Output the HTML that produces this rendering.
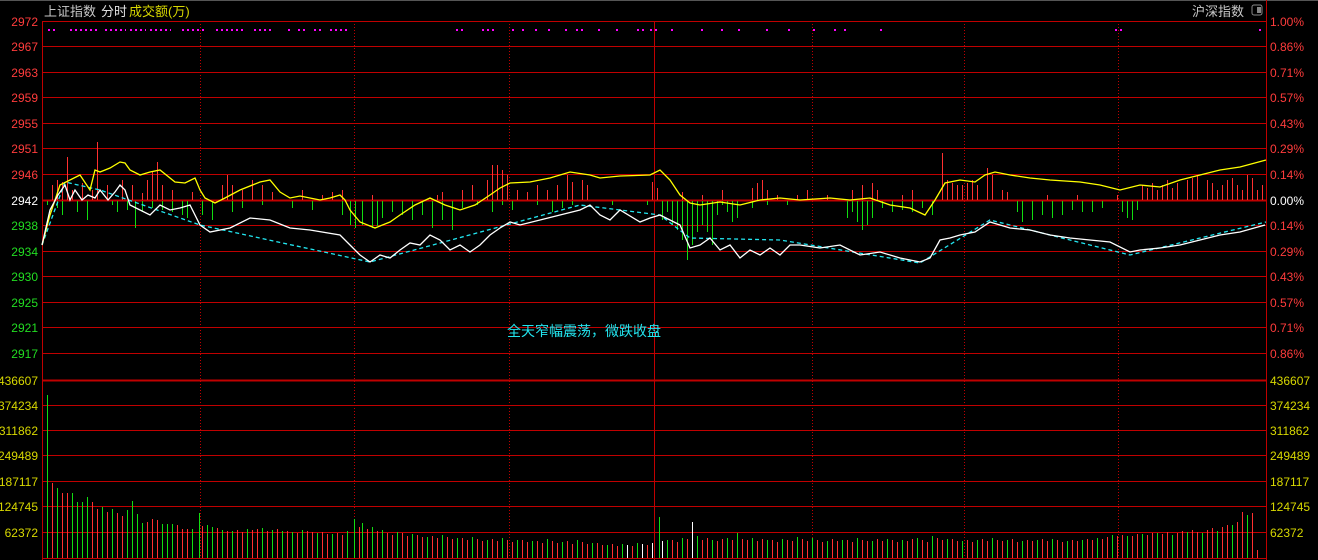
<!DOCTYPE html>
<html><head><meta charset="utf-8"><style>
html,body{margin:0;padding:0;background:#000;width:1318px;height:560px;overflow:hidden}
svg{display:block}
text{font-family:"Liberation Sans","Noto Sans CJK SC",sans-serif}
</style></head><body>
<svg width="1318" height="560" xmlns="http://www.w3.org/2000/svg">
<rect width="1318" height="560" fill="#000"/>
<line x1="0" y1="0.5" x2="1318" y2="0.5" stroke="#555"/>
<text x="44" y="16" font-size="13" fill="#c8c8c8">上证指数</text>
<text x="101" y="16" font-size="13" fill="#e0e0e0">分时</text>
<text x="129" y="16" font-size="13" fill="#d8d800">成交额(万)</text>
<text x="1192" y="16" font-size="13" fill="#c8c8c8">沪深指数</text>
<rect x="1252" y="5" width="10" height="10" rx="2" fill="none" stroke="#888"/>
<rect x="1257" y="7" width="4" height="6" fill="#888"/>

<g stroke="#c00000" fill="none">
<path d="M42 21.5H1266M42 46.5H1266M42 72.5H1266M42 97.5H1266M42 123.5H1266M42 148.5H1266M42 174.5H1266M42 225.5H1266M42 251.5H1266M42 276.5H1266M42 302.5H1266M42 327.5H1266M42 353.5H1266M42 405.5H1266M42 430.5H1266M42 455.5H1266M42 481.5H1266M42 506.5H1266M42 532.5H1266M42 558.5H1266M42.5 21V560M1266.5 0V560M654.5 21V560"/>
<path d="M42 200.5H1266M42 380.5H1266" stroke-width="2"/>
<path d="M200.5 21V560M354.5 21V560M509.5 21V560M812.5 21V560M964.5 21V560M1118.5 21V560" stroke-dasharray="1,2"/>
</g>

<g font-size="12" text-anchor="end">
<text x="38" y="26" fill="#ff3c3c">2972</text><text x="38" y="51" fill="#ff3c3c">2967</text><text x="38" y="77" fill="#ff3c3c">2963</text><text x="38" y="102" fill="#ff3c3c">2959</text><text x="38" y="128" fill="#ff3c3c">2955</text><text x="38" y="153" fill="#ff3c3c">2951</text><text x="38" y="179" fill="#ff3c3c">2946</text><text x="38" y="205" fill="#fff">2942</text><text x="38" y="230" fill="#22dd22">2938</text><text x="38" y="256" fill="#22dd22">2934</text><text x="38" y="281" fill="#22dd22">2930</text><text x="38" y="307" fill="#22dd22">2925</text><text x="38" y="332" fill="#22dd22">2921</text><text x="38" y="358" fill="#22dd22">2917</text>
<g fill="#d8d800"><text x="38" y="385">436607</text><text x="38" y="410">374234</text><text x="38" y="435">311862</text><text x="38" y="460">249489</text><text x="38" y="486">187117</text><text x="38" y="511">124745</text><text x="38" y="537">62372</text></g>
</g>
<g font-size="12" fill="#ff3c3c">
<text x="1270" y="26">1.00%</text><text x="1270" y="51">0.86%</text><text x="1270" y="77">0.71%</text><text x="1270" y="102">0.57%</text><text x="1270" y="128">0.43%</text><text x="1270" y="153">0.29%</text><text x="1270" y="179">0.14%</text><text x="1270" y="205" fill="#fff">0.00%</text><text x="1270" y="230">0.14%</text><text x="1270" y="256">0.29%</text><text x="1270" y="281">0.43%</text><text x="1270" y="307">0.57%</text><text x="1270" y="332">0.71%</text><text x="1270" y="358">0.86%</text>
<g fill="#d8d800"><text x="1270" y="385">436607</text><text x="1270" y="410">374234</text><text x="1270" y="435">311862</text><text x="1270" y="460">249489</text><text x="1270" y="486">187117</text><text x="1270" y="511">124745</text><text x="1270" y="537">62372</text></g>
</g>

<g stroke="#ff00ff" stroke-width="2" stroke-dasharray="2,3">
<path d="M48 30H57M70 30H97M105 30H126M130 30H146M150 30H171M182 30H205M216 30H244M254 30H272M288 30H291M298 30H306M314 30H322M330 30H348M456 30H466M482 30H496M512 30H515M522 30H525M535 30H538M548 30H551M565 30H568M576 30H584M598 30H601M616 30H619M637 30H645M650 30H658M671 30H674M701 30H704M721 30H724M738 30H741M766 30H769M788 30H791M813 30H816M834 30H837M844 30H847M880 30H883M1115 30H1123M1259 30H1262"/>
</g>

<path fill="none" stroke="#ff3030" d="M52.5 200V185M57.5 200V180M62.5 200V182M67.5 200V157M72.5 200V190M82.5 200V183M92.5 200V190M97.5 200V142M107.5 200V185M122.5 200V180M132.5 200V185M142.5 200V193M147.5 200V180M152.5 200V172M157.5 200V162M162.5 200V185M172.5 200V190M192.5 200V192M222.5 200V185M227.5 200V175M232.5 200V185M242.5 200V190M252.5 200V180M262.5 200V185M272.5 200V192M302.5 200V190M322.5 200V195M332.5 200V192M342.5 200V190M372.5 200V195M437.5 200V195M442.5 200V192M462.5 200V190M472.5 200V185M487.5 200V180M492.5 200V165M497.5 200V165M502.5 200V170M507.5 200V175M517.5 200V190M527.5 200V192M537.5 200V185M547.5 200V190M557.5 200V185M567.5 200V175M572.5 200V182M582.5 200V180M587.5 200V185M652.5 200V182M657.5 200V188M682.5 200V192M702.5 200V195M722.5 200V190M752.5 200V188M757.5 200V183M762.5 200V180M767.5 200V190M777.5 200V195M797.5 200V195M807.5 200V190M827.5 200V195M852.5 200V190M862.5 200V185M872.5 200V183M877.5 200V190M902.5 200V195M912.5 200V190M942.5 200V153M947.5 200V180M952.5 200V183M957.5 200V185M962.5 200V185M967.5 200V183M972.5 200V180M977.5 200V185M987.5 200V168M992.5 200V175M1002.5 200V190M1007.5 200V192M1047.5 200V195M1077.5 200V195M1117.5 200V195M1142.5 200V185M1147.5 200V188M1152.5 200V183M1157.5 200V190M1162.5 200V185M1167.5 200V180M1172.5 200V188M1177.5 200V183M1187.5 200V180M1192.5 200V178M1197.5 200V175M1207.5 200V180M1212.5 200V183M1217.5 200V190M1222.5 200V185M1227.5 200V180M1232.5 200V178M1237.5 200V185M1242.5 200V190M1247.5 200V175M1252.5 200V178M1257.5 200V190M1262.5 200V185"/>
<path fill="none" stroke="#11dd11" d="M47.5 201V205M57.5 201V208M62.5 201V215M77.5 201V212M87.5 201V220M112.5 201V205M117.5 201V212M127.5 201V210M135.5 201V228M142.5 201V212M152.5 201V208M162.5 201V210M172.5 201V212M182.5 201V215M187.5 201V218M202.5 201V215M212.5 201V220M232.5 201V212M242.5 201V208M262.5 201V205M292.5 201V208M312.5 201V210M342.5 201V215M350.5 201V225M355.5 201V228M362.5 201V225M372.5 201V228M377.5 201V226M382.5 201V218M392.5 201V212M402.5 201V215M412.5 201V220M422.5 201V215M432.5 201V228M442.5 201V220M452.5 201V230M462.5 201V208M477.5 201V205M492.5 201V212M502.5 201V205M512.5 201V210M537.5 201V205M552.5 201V212M562.5 201V208M572.5 201V205M612.5 201V205M647.5 201V205M662.5 201V220M667.5 201V212M672.5 201V225M677.5 201V230M682.5 201V240M687.5 201V260M692.5 201V245M697.5 201V232M702.5 201V225M707.5 201V232M712.5 201V245M717.5 201V215M722.5 201V205M727.5 201V212M732.5 201V222M737.5 201V218M752.5 201V208M767.5 201V205M787.5 201V205M847.5 201V218M852.5 201V212M857.5 201V222M862.5 201V230M867.5 201V225M872.5 201V218M882.5 201V208M892.5 201V212M902.5 201V210M912.5 201V212M922.5 201V208M932.5 201V215M1017.5 201V212M1022.5 201V222M1032.5 201V220M1042.5 201V215M1052.5 201V218M1062.5 201V215M1072.5 201V210M1082.5 201V212M1092.5 201V212M1102.5 201V208M1122.5 201V212M1127.5 201V218M1132.5 201V220M1137.5 201V210"/>

<path fill="none" stroke="#11dd11" d="M47.5 558V395M57.5 558V488M72.5 558V493M77.5 558V502M82.5 558V502M87.5 558V497M102.5 558V507M112.5 558V509M127.5 558V510M132.5 558V501M137.5 558V514M142.5 558V523M162.5 558V524M167.5 558V524M172.5 558V524M192.5 558V529M199.5 558V513M207.5 558V525M212.5 558V527M222.5 558V530M232.5 558V531M247.5 558V529M262.5 558V528M272.5 558V530M282.5 558V531M292.5 558V532M302.5 558V530M317.5 558V533M332.5 558V534M347.5 558V531M354.5 558V519M362.5 558V523M372.5 558V527M382.5 558V530M397.5 558V532M412.5 558V534M427.5 558V537M442.5 558V535M457.5 558V538M472.5 558V537M487.5 558V540M502.5 558V538M517.5 558V540M532.5 558V541M547.5 558V539M562.5 558V542M577.5 558V540M592.5 558V543M607.5 558V545M622.5 558V544M637.5 558V543M659.5 558V517M667.5 558V540M682.5 558V538M697.5 558V536M712.5 558V540M727.5 558V538M737.5 558V533M752.5 558V538M767.5 558V540M782.5 558V539M797.5 558V537M812.5 558V538M827.5 558V541M842.5 558V540M857.5 558V538M872.5 558V541M887.5 558V539M902.5 558V540M917.5 558V538M932.5 558V536M947.5 558V539M962.5 558V541M977.5 558V540M992.5 558V538M1007.5 558V540M1022.5 558V541M1037.5 558V540M1052.5 558V539M1067.5 558V541M1082.5 558V540M1097.5 558V538M1112.5 558V535M1127.5 558V536M1142.5 558V534M1157.5 558V533M1172.5 558V535M1187.5 558V532M1202.5 558V533M1217.5 558V531M1232.5 558V525M1247.5 558V515"/>
<path fill="none" stroke="#ff3030" d="M52.5 558V483M62.5 558V493M67.5 558V493M92.5 558V502M97.5 558V509M107.5 558V512M117.5 558V513M122.5 558V516M147.5 558V522M152.5 558V519M157.5 558V520M177.5 558V525M182.5 558V529M187.5 558V529M202.5 558V526M217.5 558V528M227.5 558V531M237.5 558V530M242.5 558V532M252.5 558V530M257.5 558V529M267.5 558V531M277.5 558V529M287.5 558V531M297.5 558V533M307.5 558V531M312.5 558V532M322.5 558V532M327.5 558V534M337.5 558V533M342.5 558V535M359.5 558V527M367.5 558V529M377.5 558V531M387.5 558V533M392.5 558V535M402.5 558V533M407.5 558V536M417.5 558V535M422.5 558V537M432.5 558V536M437.5 558V538M447.5 558V537M452.5 558V539M462.5 558V538M467.5 558V540M477.5 558V539M482.5 558V541M492.5 558V539M497.5 558V541M507.5 558V540M512.5 558V542M522.5 558V540M527.5 558V542M537.5 558V541M542.5 558V543M552.5 558V541M557.5 558V543M567.5 558V541M572.5 558V544M582.5 558V542M587.5 558V544M597.5 558V543M602.5 558V545M612.5 558V544M617.5 558V546M627.5 558V545M632.5 558V546M647.5 558V545M672.5 558V540M677.5 558V542M687.5 558V539M702.5 558V540M707.5 558V538M717.5 558V541M722.5 558V539M732.5 558V540M742.5 558V539M747.5 558V540M757.5 558V541M762.5 558V539M772.5 558V540M777.5 558V542M787.5 558V540M792.5 558V541M802.5 558V539M807.5 558V541M817.5 558V540M822.5 558V542M832.5 558V539M837.5 558V541M847.5 558V540M852.5 558V542M862.5 558V540M867.5 558V541M877.5 558V539M882.5 558V541M892.5 558V540M897.5 558V542M907.5 558V541M912.5 558V539M922.5 558V540M927.5 558V542M937.5 558V538M942.5 558V540M952.5 558V539M957.5 558V541M967.5 558V540M972.5 558V542M982.5 558V539M987.5 558V541M997.5 558V540M1002.5 558V541M1012.5 558V539M1017.5 558V542M1027.5 558V540M1032.5 558V541M1042.5 558V539M1047.5 558V541M1057.5 558V540M1062.5 558V542M1072.5 558V540M1077.5 558V541M1087.5 558V539M1092.5 558V540M1102.5 558V539M1107.5 558V537M1117.5 558V536M1122.5 558V535M1132.5 558V536M1137.5 558V534M1147.5 558V535M1152.5 558V533M1162.5 558V534M1167.5 558V532M1177.5 558V533M1182.5 558V531M1192.5 558V530M1197.5 558V532M1207.5 558V530M1212.5 558V528M1222.5 558V527M1227.5 558V525M1237.5 558V522M1242.5 558V512M1252.5 558V513M1257.5 558V550"/>
<path fill="none" stroke="#fff" d="M627.5 558V545M642.5 558V544M652.5 558V543M662.5 558V541M692.5 558V522"/>

<polyline fill="none" stroke="#22e6f0" stroke-width="1.3" stroke-dasharray="4,3" points="42,245 65,182 100,190 200,225 370,262 580,205 660,215 690,238 780,240 920,263 990,220 1130,255 1266,222"/>
<polyline fill="none" stroke="#ffff00" stroke-width="1.3" points="42,245 50,215 60,185 70,180 80,175 90,190 95,170 100,172 110,168 120,162 125,163 130,170 140,175 150,172 160,170 175,182 185,183 195,178 200,190 205,198 215,203 225,198 240,190 260,182 270,180 280,192 290,198 300,196 320,200 330,198 340,195 345,200 350,210 360,222 375,228 390,222 400,215 415,205 430,198 445,205 460,210 475,205 490,195 500,188 510,183 530,182 550,178 570,172 590,175 600,178 620,176 650,175 660,170 670,180 680,195 690,203 700,205 720,202 740,205 760,200 780,198 800,200 830,198 850,200 870,198 890,205 910,208 925,215 935,200 945,183 960,180 975,182 985,175 995,172 1010,175 1030,178 1050,180 1080,182 1100,185 1120,190 1140,185 1160,187 1180,180 1200,175 1220,170 1240,167 1266,160"/>
<polyline fill="none" stroke="#ffffff" stroke-width="1.3" points="42,245 50,210 58,195 65,185 70,200 75,190 82,200 88,195 95,198 100,190 108,200 115,192 120,185 125,190 130,205 140,210 150,215 160,205 170,210 180,208 190,205 200,225 210,232 230,228 250,218 270,220 290,228 310,230 340,235 350,245 360,255 370,262 380,255 390,258 400,250 410,243 420,245 430,235 440,240 450,250 460,245 470,252 480,245 490,235 500,228 510,222 520,225 540,220 560,215 580,210 590,205 600,215 610,220 620,210 640,222 650,218 660,215 670,220 680,225 690,248 700,245 710,238 720,250 730,245 740,258 750,250 760,255 770,248 780,255 790,245 800,245 820,248 840,245 860,255 880,252 900,258 920,262 930,258 940,240 950,238 960,235 975,232 990,222 1000,225 1010,228 1030,230 1050,235 1070,238 1090,240 1110,242 1130,252 1140,250 1160,248 1180,245 1200,240 1220,235 1240,232 1265,225"/>

<text x="507" y="336" font-size="14" fill="#22e6f0">全天窄幅震荡，微跌收盘</text>
</svg>
</body></html>
